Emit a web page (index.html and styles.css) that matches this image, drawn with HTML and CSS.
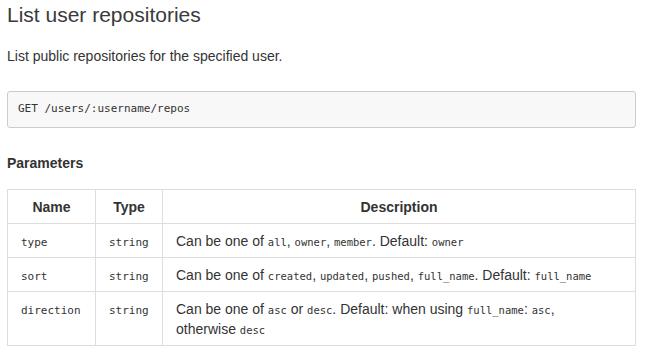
FILE: index.html
```html
<!DOCTYPE html>
<html lang="en">
<head>
  <meta charset="UTF-8" />
  <title>List user repositories</title>
  <link rel="stylesheet" href="styles.css">
</head>
<body>

<main class="doc">
  <h2 class="doc__title">List user repositories</h2>
  <p class="doc__text">List public repositories for the specified user.</p>

  <pre class="doc__endpoint"><code>GET /users/:username/repos</code></pre>

  <h3 class="doc__heading">Parameters</h3>

  <table class="params">
    <thead>
      <tr>
        <th class="params__name">Name</th>
        <th class="params__type">Type</th>
        <th>Description</th>
      </tr>
    </thead>
    <tbody>
      <tr>
        <td><code>type</code></td>
        <td><code>string</code></td>
        <td class="params__desc">Can be one of <code class="inline">all</code>, <code class="inline">owner</code>, <code class="inline">member</code>. Default: <code class="inline">owner</code></td>
      </tr>
      <tr>
        <td><code>sort</code></td>
        <td><code>string</code></td>
        <td class="params__desc">Can be one of <code class="inline">created</code>, <code class="inline">updated</code>, <code class="inline">pushed</code>, <code class="inline">full_name</code>. Default: <code class="inline">full_name</code></td>
      </tr>
      <tr>
        <td><code>direction</code></td>
        <td><code>string</code></td>
        <td class="params__desc">Can be one of <code class="inline">asc</code> or <code class="inline">desc</code>. Default: when using <code class="inline">full_name</code>: <code class="inline">asc</code>, otherwise <code class="inline">desc</code></td>
      </tr>
    </tbody>
  </table>
</main>

</body>
</html>
```

FILE: styles.css
```css
* {
  box-sizing: border-box;
}
body {
  font-family: 'Liberation Sans', Arial, sans-serif;
  font-size: 14px;
  color: #333;
  background: #fff;
  margin: 0;
}

.doc {
  width: 629px;
  margin-left: 7px;
}
.doc__title {
  margin: 0;
  font-size: 21px;
  line-height: 30px;
  font-weight: normal;
  color: #3a3a3a;
}
.doc__text {
  margin: 16px 0 0;
  line-height: 20px;
}
.doc__endpoint {
  margin: 25px 0 0;
  padding: 8px 10px 9px;
  background: #f8f8f8;
  border: 1px solid #ccc;
  border-radius: 3px;
  font-family: 'DejaVu Sans Mono', monospace;
  font-size: 11px;
  line-height: 18px;
}
.doc__heading {
  margin: 25px 0 0;
  font-size: 14px;
  line-height: 20px;
  font-weight: bold;
}

.params {
  margin-top: 16px;
  width: 100%;
  border-collapse: collapse;
}
.params th,
.params td {
  border: 1px solid #ddd;
  padding: 7px 13px 6px;
  line-height: 20px;
  vertical-align: top;
}
.params th {
  font-weight: bold;
  text-align: center;
}
.params__name {
  width: 88px;
}
.params__type {
  width: 67px;
}
.params .params__desc {
  padding-right: 24px;
}
.params code {
  font-family: 'DejaVu Sans Mono', monospace;
  font-size: 11px;
  line-height: 1;
}
.params code.inline {
  font-size: 10.5px;
}
```
